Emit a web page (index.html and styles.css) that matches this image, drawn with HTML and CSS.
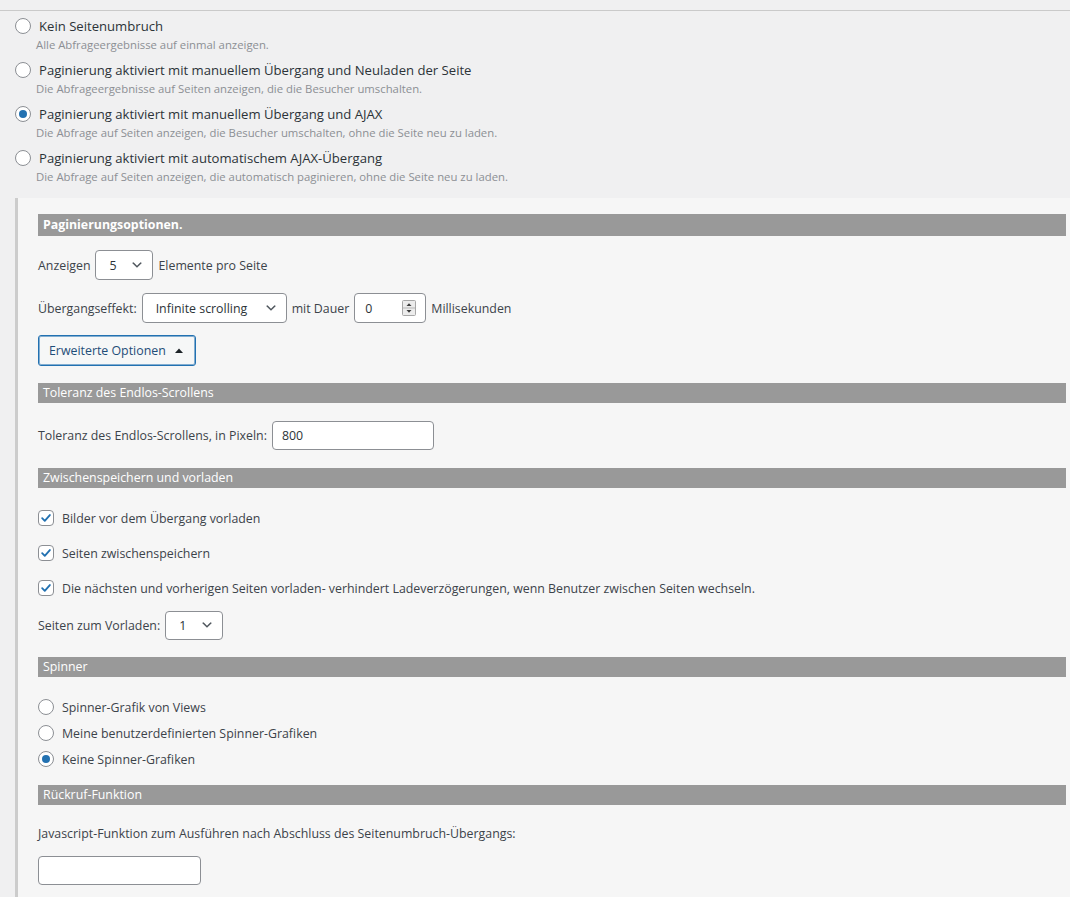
FILE: index.html
```html
<!DOCTYPE html>
<html lang="de">
<head>
<meta charset="utf-8">
<title>Paginierung</title>
<link rel="stylesheet" href="styles.css">
</head>
<body>
<div class="page">
  <div class="modes">
    <div class="mode">
      <div class="mode-label"><span class="radio"></span><span>Kein Seitenumbruch</span></div>
      <div class="mode-desc">Alle Abfrageergebnisse auf einmal anzeigen.</div>
    </div>
    <div class="mode">
      <div class="mode-label"><span class="radio"></span><span>Paginierung aktiviert mit manuellem Übergang und Neuladen der Seite</span></div>
      <div class="mode-desc">Die Abfrageergebnisse auf Seiten anzeigen, die die Besucher umschalten.</div>
    </div>
    <div class="mode">
      <div class="mode-label"><span class="radio checked"></span><span>Paginierung aktiviert mit manuellem Übergang und AJAX</span></div>
      <div class="mode-desc">Die Abfrage auf Seiten anzeigen, die Besucher umschalten, ohne die Seite neu zu laden.</div>
    </div>
    <div class="mode">
      <div class="mode-label"><span class="radio"></span><span>Paginierung aktiviert mit automatischem AJAX-Übergang</span></div>
      <div class="mode-desc">Die Abfrage auf Seiten anzeigen, die automatisch paginieren, ohne die Seite neu zu laden.</div>
    </div>
  </div>

  <div class="panel">
    <div class="bar bar-bold">Paginierungsoptionen.</div>

    <div class="row row-show">
      <span>Anzeigen</span>
      <div class="select sel-small"><span>5</span><svg class="chev" viewBox="0 0 20 20" width="14" height="14"><path d="M5 6l5 5 5-5 2 1-7 7-7-7 2-1z"/></svg></div>
      <span>Elemente pro Seite</span>
    </div>

    <div class="row row-effect">
      <span>Übergangseffekt:</span>
      <div class="select sel-effect"><span>Infinite scrolling</span><svg class="chev" viewBox="0 0 20 20" width="14" height="14"><path d="M5 6l5 5 5-5 2 1-7 7-7-7 2-1z"/></svg></div>
      <span>mit Dauer</span>
      <div class="number"><span>0</span><svg class="spin" viewBox="0 0 14 16" width="14" height="16"><rect x="0.5" y="0.5" width="13" height="15" rx="1" fill="#ececec" stroke="#a7a7a7"/><line x1="1" y1="8" x2="13" y2="8" stroke="#b5b5b5"/><polygon points="4.5,6 7,3.3 9.5,6" fill="#3c3c3c"/><polygon points="4.5,10 7,12.7 9.5,10" fill="#3c3c3c"/></svg></div>
      <span>Millisekunden</span>
    </div>

    <div class="btn-row">
      <div class="btn"><span>Erweiterte Optionen</span><svg class="tri" viewBox="0 0 8 5" width="8" height="5"><polygon points="0,5 4,0.5 8,5"/></svg></div>
    </div>

    <div class="bar bar-2">Toleranz des Endlos-Scrollens</div>

    <div class="row row-tol">
      <span>Toleranz des Endlos-Scrollens, in Pixeln:</span>
      <div class="input input-tol">800</div>
    </div>

    <div class="bar bar-3">Zwischenspeichern und vorladen</div>

    <div class="checks">
      <div class="check-row"><span class="cb"><svg viewBox="0 0 16 16" width="14" height="14"><path d="M3.6 8.2 6.6 11.2 12.4 4.6" fill="none" stroke="#2271b1" stroke-width="2.1" stroke-linecap="round" stroke-linejoin="round"/></svg></span><span>Bilder vor dem Übergang vorladen</span></div>
      <div class="check-row"><span class="cb"><svg viewBox="0 0 16 16" width="14" height="14"><path d="M3.6 8.2 6.6 11.2 12.4 4.6" fill="none" stroke="#2271b1" stroke-width="2.1" stroke-linecap="round" stroke-linejoin="round"/></svg></span><span>Seiten zwischenspeichern</span></div>
      <div class="check-row"><span class="cb"><svg viewBox="0 0 16 16" width="14" height="14"><path d="M3.6 8.2 6.6 11.2 12.4 4.6" fill="none" stroke="#2271b1" stroke-width="2.1" stroke-linecap="round" stroke-linejoin="round"/></svg></span><span>Die nächsten und vorherigen Seiten vorladen- verhindert Ladeverzögerungen, wenn Benutzer zwischen Seiten wechseln.</span></div>
    </div>

    <div class="row row-preload">
      <span>Seiten zum Vorladen:</span>
      <div class="select sel-small sel-one"><span>1</span><svg class="chev" viewBox="0 0 20 20" width="14" height="14"><path d="M5 6l5 5 5-5 2 1-7 7-7-7 2-1z"/></svg></div>
    </div>

    <div class="bar bar-4">Spinner</div>

    <div class="spinners">
      <div class="spin-row"><span class="radio"></span><span>Spinner-Grafik von Views</span></div>
      <div class="spin-row"><span class="radio"></span><span>Meine benutzerdefinierten Spinner-Grafiken</span></div>
      <div class="spin-row"><span class="radio checked"></span><span>Keine Spinner-Grafiken</span></div>
    </div>

    <div class="bar bar-5">Rückruf-Funktion</div>

    <div class="js-label">Javascript-Funktion zum Ausführen nach Abschluss des Seitenumbruch-Übergangs:</div>
    <div class="input input-js"></div>
  </div>
</div>
</body>
</html>
```

FILE: styles.css
```css
html, body {
  margin: 0;
  padding: 0;
}

body {
  background: #f0f0f1;
  font-family: "Open Sans", "Noto Sans", sans-serif;
  font-size: 12.37px;
  color: #3c434a;
}

.page {
  padding-top: 10px;
}

/* ---------- top mode radios ---------- */
.modes {
  border-top: 1px solid #cacaca;
  padding: 5px 0 6px 15px;
}

.mode {
  margin-bottom: 7px;
}

.mode-label {
  display: flex;
  align-items: center;
  height: 20px;
  font-size: 13.12px;
  color: #2c3338;
}

.mode-label .radio {
  margin-right: 8px;
}

.mode-desc {
  padding-left: 21px;
  height: 17px;
  line-height: 17px;
  font-size: 11.34px;
  color: #8c8f94;
}

.radio {
  display: inline-flex;
  align-items: center;
  justify-content: center;
  flex: none;
  width: 16px;
  height: 16px;
  box-sizing: border-box;
  border: 1px solid #8c8f94;
  border-radius: 50%;
  background: #fff;
}

.radio.checked::after {
  content: "";
  width: 8px;
  height: 8px;
  border-radius: 50%;
  background: #2271b1;
}

/* ---------- panel ---------- */
.panel {
  margin-left: 15px;
  border-left: 3px solid #cccccc;
  background: #f6f6f6;
  padding: 16px 4px 40px 20px;
}

.bar {
  background: #999999;
  color: #ffffff;
  height: 20px;
  line-height: 20px;
  padding-left: 5px;
}

.bar-bold {
  height: 22px;
  line-height: 22px;
  font-weight: 700;
}

.bar-2 { margin-top: 17px; }
.bar-3 { margin-top: 18px; }
.bar-4 { margin-top: 17px; }
.bar-5 { margin-top: 13px; }

.row {
  display: flex;
  align-items: center;
  gap: 5px;
}

.row-show {
  margin-top: 14px;
  height: 30px;
}

.row-effect {
  margin-top: 13px;
  height: 30px;
}

.select {
  display: flex;
  align-items: center;
  justify-content: space-between;
  height: 30px;
  box-sizing: border-box;
  border: 1px solid #8c8f94;
  border-radius: 4px;
  background: #fff;
  padding: 0 8px 0 13px;
  color: #2c3338;
}

.chev {
  fill: #50575e;
}

.sel-small {
  width: 58px;
}

.sel-one {
  height: 29px;
  padding-left: 13px;
}

.sel-effect {
  width: 145px;
}

.number {
  display: flex;
  align-items: center;
  justify-content: space-between;
  width: 72px;
  height: 30px;
  box-sizing: border-box;
  border: 1px solid #8c8f94;
  border-radius: 4px;
  background: #fff;
  padding: 0 9px 0 10px;
  color: #2c3338;
}

.btn-row {
  margin-top: 12px;
  display: flex;
}

.btn {
  display: inline-flex;
  align-items: center;
  gap: 9px;
  height: 31px;
  box-sizing: border-box;
  padding: 0 12px 0 10px;
  border: 1px solid #2271b1;
  border-radius: 3px;
  box-shadow: inset 0 0 0 1px rgba(34, 113, 177, 0.55);
  background: #f6f7f7;
  color: #1f4d78;
}

.tri {
  fill: #1d2327;
}

.row-tol {
  margin-top: 18px;
  height: 29px;
}

.input {
  display: flex;
  align-items: center;
  height: 29px;
  box-sizing: border-box;
  border: 1px solid #8c8f94;
  border-radius: 4px;
  background: #fff;
  padding: 0 9px;
  color: #2c3338;
}

.input-tol {
  width: 162px;
}

/* ---------- checkboxes ---------- */
.checks {
  margin-top: 18px;
}

.check-row {
  display: flex;
  align-items: center;
  height: 24px;
}

.check-row + .check-row {
  margin-top: 11px;
}

.cb {
  display: inline-flex;
  align-items: center;
  justify-content: center;
  flex: none;
  width: 16px;
  height: 16px;
  box-sizing: border-box;
  border: 1px solid #8c8f94;
  border-radius: 4px;
  background: #fff;
  margin-right: 8px;
}

.row-preload {
  margin-top: 10px;
  height: 30px;
}

/* ---------- spinner radios ---------- */
.spinners {
  margin-top: 17px;
}

.spin-row {
  display: flex;
  align-items: center;
  height: 26px;
}

.spin-row .radio {
  margin-right: 8px;
}

/* ---------- callback ---------- */
.js-label {
  margin-top: 19px;
  line-height: 20px;
}

.input-js {
  margin-top: 12px;
  width: 163px;
  background: #fff;
}
```
